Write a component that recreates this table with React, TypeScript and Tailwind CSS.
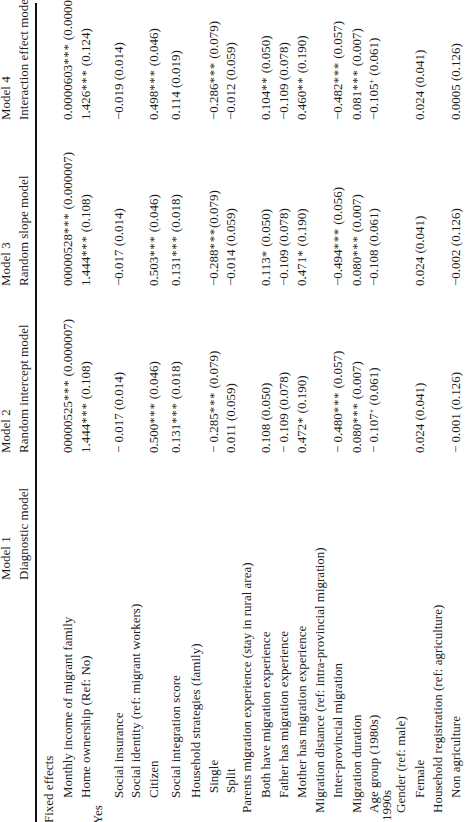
import * as React from 'react';

type Row = {
  label: React.ReactNode;
  /** indent of the label, px */
  pl: string;
  /** space above the row */
  mt: string;
  v?: [React.ReactNode, React.ReactNode, React.ReactNode];
};

const P = () => <sup className="text-[8px] leading-none">+</sup>;

// stars in the scan sit a little apart ("* * *")
function cell(s: React.ReactNode): React.ReactNode {
  if (typeof s !== 'string') return s;
  return s.split(/(\*+)/).map((part, i) =>
    part.startsWith('*') ? (
      <span key={i} className="tracking-[0.6px]">
        {part}
      </span>
    ) : (
      part
    ),
  );
}

// Table is laid out upright (822 wide) and turned a quarter turn, as in the scan.
const rows: Row[] = [
  { label: 'Fixed effects', pl: 'pl-[2px]', mt: 'mt-[6px]' },
  {
    label: 'Monthly income of migrant family',
    pl: 'pl-[27px]',
    mt: 'mt-[7px]',
    v: ['00000525*** (0.000007)', '00000528*** (0.000007)', '0.0000603*** (0.00001)'],
  },
  {
    label: 'Home ownership (Ref: No)',
    pl: 'pl-[27px]',
    mt: 'mt-[6px]',
    v: ['1.444*** (0.108)', '1.444*** (0.108)', '1.426*** (0.124)'],
  },
  { label: 'Yes', pl: 'pl-[1px]', mt: 'mt-0' },
  {
    label: 'Social insurance',
    pl: 'pl-[27px]',
    mt: 'mt-[9px]',
    v: ['− 0.017 (0.014)', '−0.017 (0.014)', '−0.019 (0.014)'],
  },
  { label: 'Social identity (ref: migrant workers)', pl: 'pl-[27px]', mt: 'mt-[5px]' },
  {
    label: 'Citizen',
    pl: 'pl-[27px]',
    mt: 'mt-[6px]',
    v: ['0.500*** (0.046)', '0.503*** (0.046)', '0.498*** (0.046)'],
  },
  {
    label: 'Social integration score',
    pl: 'pl-[27px]',
    mt: 'mt-[10px]',
    v: ['0.131*** (0.018)', '0.131*** (0.018)', '0.114 (0.019)'],
  },
  { label: 'Household strategies (family)', pl: 'pl-[27px]', mt: 'mt-[8px]' },
  {
    label: 'Single',
    pl: 'pl-[32px]',
    mt: 'mt-[6px]',
    v: ['− 0.285*** (0.079)', '−0.288***(0.079)', '−0.286*** (0.079)'],
  },
  {
    label: 'Split',
    pl: 'pl-[32px]',
    mt: 'mt-[5px]',
    v: ['0.011 (0.059)', '−0.014 (0.059)', '−0.012 (0.059)'],
  },
  { label: 'Parents migration experience (stay in rural area)', pl: 'pl-[12px]', mt: 'mt-[4px]' },
  {
    label: 'Both have migration experience',
    pl: 'pl-[27px]',
    mt: 'mt-[7px]',
    v: ['0.108 (0.050)', '0.113* (0.050)', '0.104** (0.050)'],
  },
  {
    label: 'Father has migration experience',
    pl: 'pl-[27px]',
    mt: 'mt-[6px]',
    v: ['− 0.109 (0.078)', '−0.109 (0.078)', '−0.109 (0.078)'],
  },
  {
    label: 'Mother has migration experience',
    pl: 'pl-[27px]',
    mt: 'mt-[6px]',
    v: ['0.472* (0.190)', '0.471* (0.190)', '0.460** (0.190)'],
  },
  { label: 'Migration distance (ref: intra-provincial migration)', pl: 'pl-[12px]', mt: 'mt-[6px]' },
  {
    label: 'Inter-provincial migration',
    pl: 'pl-[27px]',
    mt: 'mt-[6px]',
    v: ['− 0.480*** (0.057)', '−0.494*** (0.056)', '−0.482*** (0.057)'],
  },
  {
    label: 'Migration duration',
    pl: 'pl-[12px]',
    mt: 'mt-[7px]',
    v: ['0.080*** (0.007)', '0.080*** (0.007)', '0.081*** (0.007)'],
  },
  {
    label: 'Age group (1980s)',
    pl: 'pl-[12px]',
    mt: 'mt-[5px]',
    v: [
      <>
        − 0.107<P /> (0.061)
      </>,
      '−0.108 (0.061)',
      <>
        −0.105<P /> (0.061)
      </>,
    ],
  },
  { label: '1990s', pl: 'pl-[4px]', mt: 'mt-[1px]' },
  { label: 'Gender (ref: male)', pl: 'pl-[12px]', mt: 'mt-[2px]' },
  {
    label: 'Female',
    pl: 'pl-[27px]',
    mt: 'mt-[7px]',
    v: ['0.024 (0.041)', '0.024 (0.041)', '0.024 (0.041)'],
  },
  { label: 'Household registration (ref: agriculture)', pl: 'pl-[12px]', mt: 'mt-[6px]' },
  {
    label: 'Non agriculture',
    pl: 'pl-[27px]',
    mt: 'mt-[6px]',
    v: ['− 0.001 (0.126)', '−0.002 (0.126)', '0.0005 (0.126)'],
  },
];

const cols = 'grid grid-cols-[245px_127px_167px_166px_1fr] whitespace-nowrap';

export default function App(): JSX.Element {
  return (
    <div className="h-[822px] w-[474px] overflow-hidden bg-white">
      <div className="h-[474px] w-[822px] origin-top-left -rotate-90 translate-y-[822px] font-['Liberation_Serif','Times_New_Roman',serif] text-[13px] leading-[12px] text-[#1c1c1c]">
        <div className={`${cols} h-[12px] mt-[3px]`}>
          <span />
          <span>Model 1</span>
          <span>Model 2</span>
          <span>Model 3</span>
          <span>Model 4</span>
        </div>
        <div className={`${cols} h-[12px] mt-[6px]`}>
          <span />
          <span>Diagnostic model</span>
          <span>Random intercept model</span>
          <span>Random slope model</span>
          <span>Interaction effect model</span>
        </div>
        <div className="mt-[5px] h-[2px] bg-[#111]" />

        {rows.map((r, i) => (
          <div key={i} className={`${cols} h-[12px] ${r.mt}`}>
            <span className={r.pl}>{r.label}</span>
            <span />
            <span>{cell(r.v?.[0])}</span>
            <span>{cell(r.v?.[1])}</span>
            <span>{cell(r.v?.[2])}</span>
          </div>
        ))}
      </div>
    </div>
  );
}
